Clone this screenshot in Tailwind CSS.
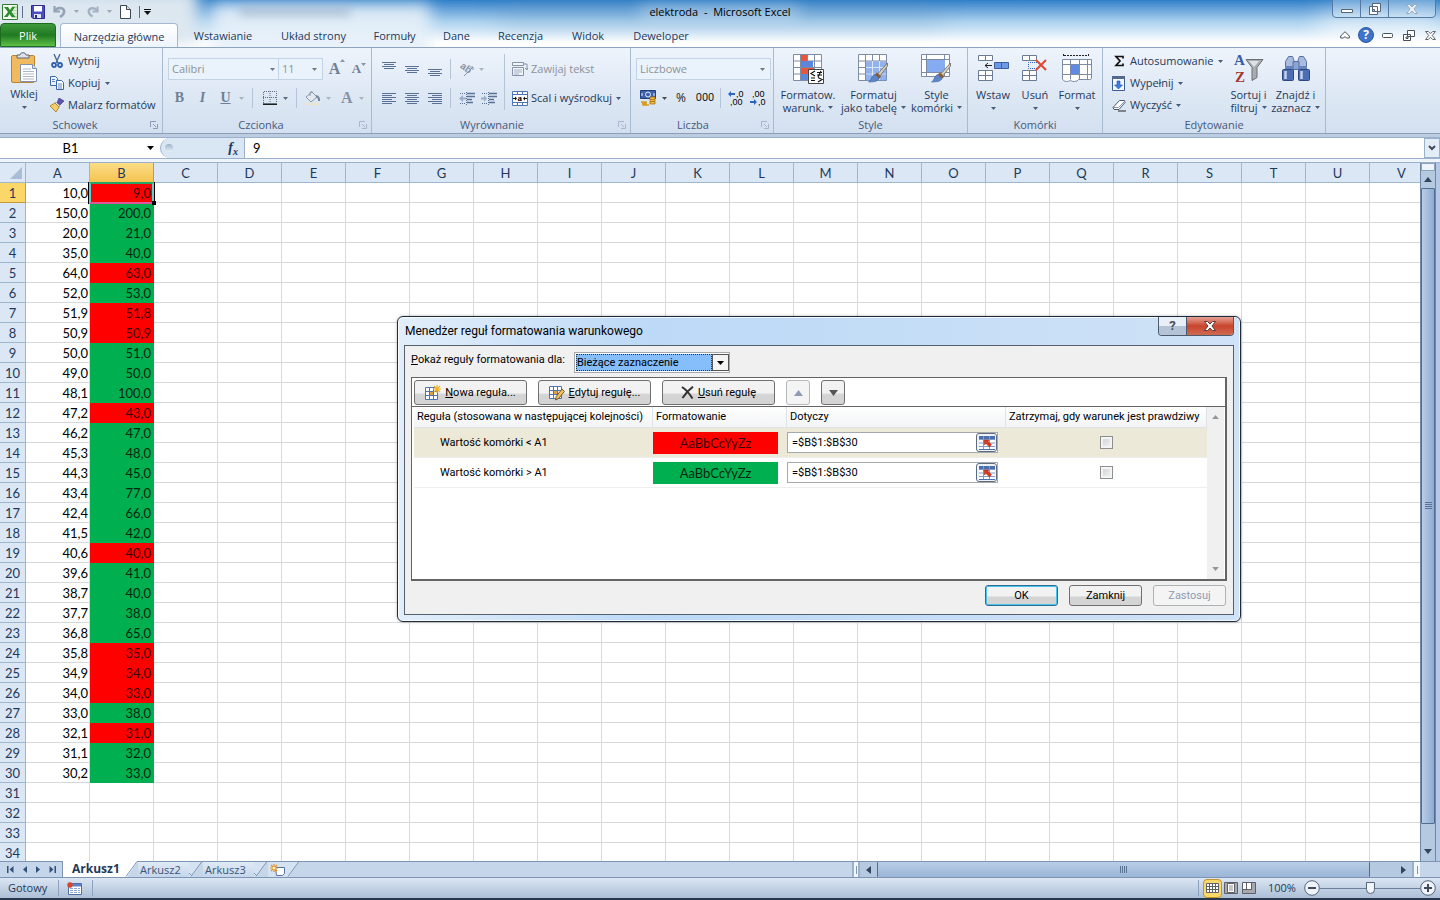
<!DOCTYPE html>
<html lang="pl">
<head>
    <meta charset="UTF-8">
    <meta name="viewport" content="width=device-width, initial-scale=1.0">
    <title>elektroda - Microsoft Excel</title>
    <script src="https://cdn.jsdelivr.net/npm/@tailwindcss/browser@4"></script>
</head>
<body class="h-screen flex flex-col overflow-hidden bg-[#bccde2] font-['Open_Sans',sans-serif] text-[11px] leading-4 text-[#1e395b]">

    <!-- Shared icons -->
    <svg class="hidden">
        <symbol id="down" viewBox="0 0 5 3"><path d="M0 0h5L2.500 3z" fill="currentColor" fill-opacity=".8"/></symbol>
        <symbol id="up" viewBox="0 0 5 3"><path d="M0 3h5L2.500 0z" fill="currentColor" fill-opacity=".8"/></symbol>
        <symbol id="launcher" viewBox="0 0 8 8"><path d="M.5 6V.5H6" fill="none" stroke="#8a9bb3"/><path d="M3 3l3 3M7.500 3v4.500H3" fill="none" stroke="#8a9bb3"/></symbol>
        <symbol id="brush" viewBox="0 0 20 20"><path d="M19 1L10 11l2 2 7-9z" fill="#d8d2c4" stroke="#6b655a" stroke-width=".8"/><path d="M9 10l4 4-2 2-4-4z" fill="#8a5a32"/><path d="M7 12l4 4c-2 3-6 3-10 3 3-1 2-6 6-7z" fill="#5d86c8" stroke="#3d62a0" stroke-width=".6"/></symbol>
        <symbol id="grid" viewBox="0 0 30 27"><path d="M.5.500h28v26H.5z" fill="#fff"/><path d="M.5.500h28v26H.5zM.5 7h28M.5 13.500h28M.5 20h28M7.500.500v26M14.500.500v26M21.500.500v26" fill="none" stroke="#7d8ba3"/></symbol>
        <symbol id="picker" viewBox="0 0 16 14"><path d="M.5.500h15v13H.5z" fill="#fff"/><path d="M0 0h16v3H0z" fill="#4a6fae"/><path d="M0 3.500h16M0 7h16M0 10.500h16M4.500 0v14M10.500 0v14" stroke="#7f9bc9" fill="none"/><path d="M0 13.500h16" stroke="#4a6fae"/><path d="M5 4h5L9 5.500l3.500 3-2 2.500L7 7.500 5.500 9z" fill="#d63a1c" stroke="#a82a14" stroke-width=".5"/></symbol>
    </svg>

    <!-- Title bar and tabs -->
    <header class="relative h-[48px] shrink-0 flex flex-col overflow-hidden bg-linear-to-b from-[#2f80c8] via-[#a9d0ee] via-45% to-white to-90% border-b border-[#8ea3bf]">
        <div class="absolute -left-4 -top-3 w-[214px] h-14 bg-[#dde7f0] blur-sm"></div>
        <div class="absolute left-[212px] top-1 w-[218px] h-14 bg-[#e6eff8]/90 blur-sm"></div>
        <div class="absolute left-[240px] top-2 w-[110px] h-2 bg-[#8da2b8]/50 blur-xs"></div>
        <div class="absolute left-[500px] top-2 w-[440px] h-3 bg-[#5c8db8]/40 blur-md"></div>
        <div class="absolute left-[640px] top-1.5 w-[160px] h-3 bg-white/40 blur-sm"></div>
        <div class="absolute right-0 top-3 w-[120px] h-10 bg-white/50 blur-md"></div>

        <div class="relative h-6 flex items-center pl-0.5">
            <svg class="w-4 h-4" viewBox="0 0 16 16"><path d="M.5.500h15v15H.5z" fill="#f4fbf1" stroke="#2f7d32"/><path d="M10 2h5v12h-5z" fill="#b9dcae"/><path d="M10 5h5M10 8h5M10 11h5" stroke="#fff"/><path d="M2 3h4l2 3 2-3h3L9.500 8l4 5h-4L7.500 10l-2 3H2l4-5z" fill="#2e8b32"/></svg>
            <span class="w-px h-3 bg-[#5f7086] ml-1"></span>
            <button aria-label="Zapisz" class="ml-2"><svg class="w-[14px] h-[14px]" viewBox="0 0 14 14"><path d="M.5.500h13v13H2L.5 12z" fill="#4b4fc0" stroke="#2b2f86"/><path d="M3 1h8v5.500H3z" fill="#fff"/><path d="M3 9h7v4H3z" fill="#dfe3f3"/><path d="M4 10h2v3H4z" fill="#2b2f86"/></svg></button>
            <button aria-label="Cofnij" class="ml-2 flex items-center gap-2 text-[#8b97a6]"><svg class="w-[13px] h-[13px]" viewBox="0 0 13 13"><path d="M1.500 1v5.500H7" fill="none" stroke="#94a3b8" stroke-width="2.200"/><path d="M2 6c2-4 8-4 9-.5.600 3-1.500 5-4 6.500" fill="none" stroke="#94a3b8" stroke-width="2.600"/></svg><svg class="w-[5px] h-[3px]"><use href="#down"/></svg></button>
            <button aria-label="Ponów" class="ml-2 flex items-center gap-2 text-[#8b97a6]"><svg class="w-[12px] h-[13px]" viewBox="0 0 13 13"><path d="M11.500 1v5.500H6" fill="none" stroke="#a5b2c4" stroke-width="2.200"/><path d="M11 6C9 2 3 2 2 5.500c-.6 3 1.500 5 4 6.500" fill="none" stroke="#a5b2c4" stroke-width="2.600"/></svg><svg class="w-[5px] h-[3px]"><use href="#down"/></svg></button>
            <button aria-label="Nowy" class="ml-2"><svg class="w-[11px] h-[14px]" viewBox="0 0 11 14"><path d="M.5.500h6l4 4v9H.5z" fill="#fff" stroke="#3b4656"/><path d="M6.500.500v4h4" fill="#d8e2ee" stroke="#3b4656"/></svg></button>
            <span class="w-px h-3 bg-[#5f7086] ml-2"></span>
            <button aria-label="Dostosuj" class="ml-1"><svg class="w-[7px] h-[6px]" viewBox="0 0 7 6"><path d="M0 0h7v1H0zM0 2h7L3.500 6z" fill="#111"/></svg></button>
        </div>
        <h1 class="absolute inset-x-0 top-1 text-center text-black whitespace-pre">elektroda  -  Microsoft Excel</h1>
        <div class="absolute right-1 -top-px flex h-[19px] border border-[#5579a2] rounded-b bg-white/25 text-white">
            <button aria-label="Minimalizuj" class="w-7 grid place-items-center border-r border-[#5579a2]"><svg class="w-3 h-5" viewBox="0 0 12 20"><path d="M.5 9.500h11v3H.5z" fill="#fff" stroke="#55657a"/></svg></button>
            <button aria-label="Przywróć" class="w-7 grid place-items-center border-r border-[#5579a2]"><svg class="w-3 h-3" viewBox="0 0 12 12"><path d="M3.500.500h8v8h-8zM.5 3.500h8v8h-8z" fill="#fff" stroke="#55657a"/><path d="M3.500 6.500h2v2h-2z" fill="#9cc" stroke="#55657a"/></svg></button>
            <button aria-label="Zamknij program" class="w-[46px] grid place-items-center"><svg class="w-3 h-[10px]" viewBox="0 0 12 10"><path d="M.5.500h3L6 3 8.500.500h3L8 5l3.500 4.500h-3L6 7 3.500 9.500h-3L4 5z" fill="#e9f0f7" stroke="#93a9c0"/></svg></button>
        </div>

        <nav class="relative flex h-6">
            <button class="w-14 h-6 pt-0.5 rounded-t-sm border border-[#1c6b1e] bg-linear-to-b from-[#3f9a3c] via-[#1f7a22] to-[#5cbf45] text-white">Plik</button>
            <a href="#" class="ml-1 w-[118px] h-6 pt-0.5 grid place-items-center rounded-t border border-b-0 border-[#a6b8d0] bg-linear-to-b from-white to-[#eef4fc]">Narzędzia główne</a>
            <a href="#" class="w-[90px] pt-0.5 grid place-items-center">Wstawianie</a>
            <a href="#" class="w-[91px] pt-0.5 grid place-items-center">Układ strony</a>
            <a href="#" class="w-[71px] pt-0.5 grid place-items-center">Formuły</a>
            <a href="#" class="w-[53px] pt-0.5 grid place-items-center">Dane</a>
            <a href="#" class="w-[75px] pt-0.5 grid place-items-center">Recenzja</a>
            <a href="#" class="w-[60px] pt-0.5 grid place-items-center">Widok</a>
            <a href="#" class="w-[86px] pt-0.5 grid place-items-center">Deweloper</a>
            <div class="ml-auto mr-1 flex items-center gap-2">
                <button aria-label="Zwiń wstążkę"><svg class="w-[10px] h-[8px]" viewBox="0 0 10 8"><path d="M5 .7L9.300 5v2H6.500L5 5.500 3.500 7H.7V5z" fill="#fff" stroke="#4a5058"/></svg></button>
                <button aria-label="Pomoc" class="w-4 h-4 rounded-full bg-[#3d73c8] border border-[#2a57a0] text-white font-bold text-xs leading-[14px]">?</button>
                <button aria-label="Minimalizuj skoroszyt"><svg class="w-[11px] h-[5px]" viewBox="0 0 11 5"><rect x=".5" y=".5" width="10" height="4" rx="1" fill="#fff" stroke="#4a5058"/></svg></button>
                <button aria-label="Przywróć skoroszyt" class="ml-0.5"><svg class="w-3 h-[11px]" viewBox="0 0 12 11"><path d="M4.500.500h7v6h-7zM.5 4.500h7v6h-7z" fill="#fff" stroke="#4a5058"/><path d="M3 7h2v1.500H3z" fill="none" stroke="#4a5058"/></svg></button>
                <button aria-label="Zamknij skoroszyt" class="ml-0.5"><svg class="w-[11px] h-[9px]" viewBox="0 0 12 10"><path d="M.5.500h3L6 3 8.500.500h3L8 5l3.500 4.500h-3L6 7 3.500 9.500h-3L4 5z" fill="#fff" stroke="#4a5058"/></svg></button>
            </div>
        </nav>
    </header>

    <!-- Ribbon -->
    <div class="flex shrink-0 h-[86px] bg-linear-to-b from-[#eef4fc] via-[#dfe9f5] to-[#d3e0f0] border-b border-[#8b9fba]">
        <section class="w-[163px] shrink-0 flex flex-col border-r border-[#a9bbd2]">
            <div class="h-[69px] flex">
                <button class="w-12 flex flex-col items-center pt-1">
                    <svg class="w-8 h-8" viewBox="0 0 32 32"><rect x="3.500" y="3.500" width="23" height="27" rx="1.500" fill="#efbb5e" stroke="#b98532"/><path d="M9 6V3h3c0-3 6-3 6 0h3v3z" fill="#dfe3e8" stroke="#5d6672"/><path d="M12.500 12.500h12l4 4v13h-16z" fill="#fff" stroke="#7f92ad"/><path d="M24.500 12.500v4h4" fill="#d5e0ee" stroke="#7f92ad"/><path d="M15 17h8M15 19.500h11M15 22h11M15 24.500h11M15 27h11" stroke="#a9b7cb"/></svg>
                    <span class="leading-4 mt-0.5">Wklej</span>
                    <svg class="w-[5px] h-[3px] mt-1"><use href="#down"/></svg>
                </button>
                <div class="flex flex-col pt-0.5 pl-0.5">
                    <button class="h-[22px] flex items-center gap-1"><svg class="w-[14px] h-[14px]" viewBox="0 0 14 14"><path d="M4 0l4 9M10 0L6 9" stroke="#4c6a94" stroke-width="1.400"/><circle cx="4" cy="11" r="2" fill="none" stroke="#2f5fb0" stroke-width="1.800"/><circle cx="10" cy="11" r="2" fill="none" stroke="#2f5fb0" stroke-width="1.800"/></svg>Wytnij</button>
                    <button class="h-[22px] flex items-center gap-1"><svg class="w-[14px] h-[14px]" viewBox="0 0 14 14"><path d="M.5.500h5l2 2v7h-7z" fill="#e9f1fb" stroke="#3c66a8"/><path d="M6.500 4.500h5l2 2v7h-7z" fill="#fff" stroke="#3c66a8"/><path d="M2 3.500h3M2 5.500h3M8 8h4M8 10h4M8 12h4" stroke="#5c86c4"/></svg>Kopiuj<svg class="w-[5px] h-[3px] ml-px"><use href="#down"/></svg></button>
                    <button class="h-[22px] flex items-center gap-1 whitespace-nowrap"><svg class="w-[14px] h-[14px]" viewBox="0 0 14 14"><path d="M9 0l5 3-4 4-3-2z" fill="#5b55b0" stroke="#39347e" stroke-width=".6"/><path d="M6 4l4 4-1 1-4-4z" fill="#e8e8ee" stroke="#77747e" stroke-width=".5"/><path d="M5 5l4 4-3 5L0 8z" fill="#f3cf6b" stroke="#a8761f" stroke-width=".8"/></svg>Malarz formatów</button>
                </div>
            </div>
            <div class="flex items-center h-4 pr-1"><span class="flex-1 text-center text-[#48597a]">Schowek</span><svg class="w-2 h-2"><use href="#launcher"/></svg></div>
        </section>

        <section class="w-[209px] shrink-0 flex flex-col border-r border-[#a9bbd2]">
            <div class="h-[69px] flex flex-col pt-2.5 gap-[7px] pl-[5px]">
                <div class="flex items-center h-[22px]">
                    <div class="relative w-[111px] h-[22px]"><select aria-label="Czcionka" class="appearance-none w-full h-full pl-[3px] border border-[#c3d3e6] bg-[#eaf2fb] text-[#8d9299] outline-none"><option>Calibri</option></select><svg class="absolute right-1 top-2.5 w-[5px] h-[3px] text-[#4d5a6c]"><use href="#down"/></svg></div>
                    <div class="relative w-11 h-[22px]"><select aria-label="Rozmiar czcionki" class="appearance-none w-full h-full pl-[3px] border border-l-0 border-[#c3d3e6] bg-[#eaf2fb] text-[#8d9299] outline-none"><option>11</option></select><svg class="absolute right-1.5 top-2.5 w-[5px] h-[3px] text-[#4d5a6c]"><use href="#down"/></svg></div>
                    <button aria-label="Zwiększ czcionkę" class="ml-[3px] w-[22px] flex justify-center font-['Liberation_Serif',serif] font-bold text-base text-[#6f7f97]">A<svg class="w-[5px] h-[3px] mt-0.5"><use href="#up"/></svg></button>
                    <button aria-label="Zmniejsz czcionkę" class="w-[22px] flex justify-center font-['Liberation_Serif',serif] font-bold text-[13px] text-[#6f7f97]">A<svg class="w-[5px] h-[3px] mt-0.5"><use href="#down"/></svg></button>
                </div>
                <div class="flex items-center h-[22px] text-[#6f7f97]">
                    <button class="w-[23px] font-['Liberation_Serif',serif] font-bold text-sm">B</button>
                    <button class="w-[23px] font-['Liberation_Serif',serif] italic font-bold text-sm">I</button>
                    <button class="w-[23px] font-['Liberation_Serif',serif] font-bold text-sm underline">U</button>
                    <svg class="w-[5px] h-[3px] ml-0.5 text-[#9aa6b8]"><use href="#down"/></svg>
                    <span class="w-px h-5 bg-[#b4c3d7] ml-2 mr-1"></span>
                    <button aria-label="Obramowanie" class="flex items-center gap-1.5 pl-1.5"><svg class="w-[14px] h-[14px]" viewBox="0 0 14 14"><path d="M.5 12V.500h13V12M7 0v12M0 6.500h14" fill="none" stroke="#5f6f87" stroke-dasharray="1 1"/><path d="M0 13.200h14" stroke="#111" stroke-width="1.500"/></svg><svg class="w-[5px] h-[3px] text-[#3c4a5f]"><use href="#down"/></svg></button>
                    <span class="w-px h-5 bg-[#b4c3d7] ml-2 mr-1"></span>
                    <button aria-label="Kolor wypełnienia" class="flex items-center gap-1.5 pl-1"><svg class="w-[15px] h-[14px]" viewBox="0 0 15 14"><path d="M1 6l6-5 5 5-6 5z" fill="#e4e9f0" stroke="#8a97aa"/><path d="M5 5V1.500q1.500-2 3 0" fill="none" stroke="#8a97aa"/><path d="M11 5q3.500 1 3 5" stroke="#7587a2" stroke-width="2" fill="none"/><path d="M0 13h14" stroke="#efe5cf" stroke-width="2"/></svg><svg class="w-[5px] h-[3px] text-[#9aa6b8]"><use href="#down"/></svg></button>
                    <button aria-label="Kolor czcionki" class="ml-2.5 flex items-center gap-1.5 font-['Liberation_Serif',serif] font-bold text-base text-[#8592a7]">A<svg class="w-[5px] h-[3px] text-[#9aa6b8]"><use href="#down"/></svg></button>
                </div>
            </div>
            <div class="flex items-center h-4 pr-1"><span class="flex-1 text-center text-[#48597a]">Czcionka</span><svg class="w-2 h-2 opacity-60"><use href="#launcher"/></svg></div>
        </section>

        <section class="w-[259px] shrink-0 flex flex-col border-r border-[#a9bbd2]">
            <div class="h-[69px] flex pt-1.5">
                <div class="flex flex-col gap-[7px] pt-1 pl-[5px] w-[132px] text-[#5a7196]">
                    <div class="flex items-center h-[22px]">
                        <button aria-label="Do góry" class="w-[23px] grid place-items-center"><svg class="w-[14px] h-[14px]" viewBox="0 0 14 14"><path d="M0 .5h14M2 2.500h10M0 4.500h14M2 6.500h10" stroke="currentColor"/></svg></button>
                        <button aria-label="Do środka" class="w-[23px] grid place-items-center"><svg class="w-[14px] h-[14px]" viewBox="0 0 14 14"><path d="M0 4.500h14M2 6.500h10M0 8.500h14M2 10.500h10" stroke="currentColor"/></svg></button>
                        <button aria-label="Do dołu" class="w-[23px] grid place-items-center"><svg class="w-[14px] h-[14px]" viewBox="0 0 14 14"><path d="M0 7.500h14M2 9.500h10M0 11.500h14M2 13.500h10" stroke="currentColor"/></svg></button>
                        <span class="w-px h-5 bg-[#b4c3d7] ml-1 mr-2"></span>
                        <button aria-label="Orientacja" class="flex items-center gap-1"><svg class="w-4 h-4 overflow-visible" viewBox="0 0 16 16"><text x="0" y="8" transform="rotate(35 3 8)" font-size="10" font-weight="bold" fill="#8592a7" font-family="Liberation Sans">ab</text><path d="M5 15L14 6M11 6h3v3" fill="none" stroke="#8592a7"/></svg><svg class="w-[5px] h-[3px] text-[#9aa6b8]"><use href="#down"/></svg></button>
                    </div>
                    <div class="flex items-center h-[22px]">
                        <button aria-label="Do lewej" class="w-[23px] grid place-items-center"><svg class="w-[14px] h-[11px]" viewBox="0 0 14 11"><path d="M0 .5h14M0 2.500h10M0 4.500h14M0 6.500h10M0 8.500h14M0 10.500h10" stroke="currentColor"/></svg></button>
                        <button aria-label="Wyśrodkuj" class="w-[23px] grid place-items-center"><svg class="w-[14px] h-[11px]" viewBox="0 0 14 11"><path d="M0 .5h14M2 2.500h10M0 4.500h14M2 6.500h10M0 8.500h14M2 10.500h10" stroke="currentColor"/></svg></button>
                        <button aria-label="Do prawej" class="w-[23px] grid place-items-center"><svg class="w-[14px] h-[11px]" viewBox="0 0 14 11"><path d="M0 .5h14M4 2.500h10M0 4.500h14M4 6.500h10M0 8.500h14M4 10.500h10" stroke="currentColor"/></svg></button>
                        <span class="w-px h-5 bg-[#b4c3d7] ml-1 mr-2"></span>
                        <button aria-label="Zmniejsz wcięcie"><svg class="w-4 h-[13px]" viewBox="0 0 16 13"><path d="M1 1.500h5M1 11.500h5M7.500 0v13" stroke="#5a7196" stroke-dasharray="1 1"/><path d="M8 1.500h8M8 4.500h8M8 7.500h5M8 10.500h6" stroke="#5a7196" stroke-width="1.500"/><path d="M0 6.500L4 3v2.500h3v2H4V10z" fill="#9bacc6"/></svg></button>
                        <button aria-label="Zwiększ wcięcie" class="ml-1.5"><svg class="w-4 h-[13px]" viewBox="0 0 16 13"><path d="M1 1.500h5M1 11.500h5M7.500 0v13" stroke="#5a7196" stroke-dasharray="1 1"/><path d="M8 1.500h8M8 4.500h8M8 7.500h5M8 10.500h6" stroke="#5a7196" stroke-width="1.500"/><path d="M6 6.500L3 3v2.500H0v2h3V10z" fill="#9bacc6"/></svg></button>
                    </div>
                </div>
                <span class="w-px h-[56px] bg-[#b4c3d7]"></span>
                <div class="flex flex-col gap-[7px] pt-1 pl-[7px]">
                    <button class="h-[22px] flex items-center gap-[3px] text-[#8d9299] whitespace-nowrap"><svg class="w-4 h-4" viewBox="0 0 16 16"><path d="M.5 1.500h11v3H.5zM.5 6.500h11v8H.5z" fill="#f2f5f9" stroke="#8592a7"/><path d="M2 9h8M2 11h8M2 13h5" stroke="#a3afc0"/><path d="M12 3h3v5M13 7l2 2 1-2" fill="none" stroke="#8592a7"/></svg>Zawijaj tekst</button>
                    <button class="h-[22px] flex items-center gap-[3px] whitespace-nowrap"><svg class="w-4 h-[15px]" viewBox="0 0 16 15"><path d="M.5.500h15v14H.5z" fill="#fff" stroke="#4c74b4"/><path d="M0 3.500h16M0 11.500h16M5.500 0v3M10.500 0v3M5.500 12v3M10.500 12v3" stroke="#4c74b4"/><path d="M1 7.500h3M12 7.500h3" stroke="#111"/><path d="M3 5.500L5 7.500 3 9.500zM13 5.500L11 7.500l2 2z" fill="#111"/><text x="5.500" y="10" font-size="9" font-weight="bold" font-family="Liberation Serif">a</text></svg>Scal i wyśrodkuj<svg class="w-[5px] h-[3px] ml-px"><use href="#down"/></svg></button>
                </div>
            </div>
            <div class="flex items-center h-4 pr-1"><span class="flex-1 text-center pr-1.5 text-[#48597a]">Wyrównanie</span><svg class="w-2 h-2 opacity-60"><use href="#launcher"/></svg></div>
        </section>

        <section class="w-[143px] shrink-0 flex flex-col border-r border-[#a9bbd2]">
            <div class="h-[69px] flex flex-col pt-2.5 gap-[7px] pl-[5px]">
                <div class="relative w-[135px] h-[22px]"><select aria-label="Format liczb" class="appearance-none w-full h-full pl-[3px] border border-[#c3d3e6] bg-[#eaf2fb] text-[#8d9299] outline-none"><option>Liczbowe</option></select><svg class="absolute right-1.5 top-2.5 w-[5px] h-[3px] text-[#4d5a6c]"><use href="#down"/></svg></div>
                <div class="flex items-center h-[22px] pl-1 text-[#222]">
                    <button aria-label="Format księgowy" class="flex items-center gap-1.5"><svg class="w-4 h-4" viewBox="0 0 16 16"><path d="M.5.500h15v8H.5z" fill="#3f62ad" stroke="#223e7c"/><circle cx="8" cy="4.500" r="2.500" fill="none" stroke="#e8eefc"/><path d="M2 3v3M14 3v3" stroke="#e8eefc"/><path d="M10 7h5v7h-5z" fill="#f0b93c" stroke="#9a6a10" stroke-width=".7"/><path d="M10 9.500h5M10 11.500h5" stroke="#9a6a10" stroke-width=".7"/><path d="M1 12h5v1.500H3V15h6" fill="none" stroke="#d79b22" stroke-width="1.700"/></svg><svg class="w-[5px] h-[3px]"><use href="#down"/></svg></button>
                    <button class="w-6 ml-0.5 text-xs">%</button>
                    <button class="w-6 font-['Roboto',sans-serif]">000</button>
                    <span class="w-px h-5 bg-[#b4c3d7] mx-[3px]"></span>
                    <button aria-label="Zwiększ dziesiętne" class="ml-1"><svg class="w-4 h-4 overflow-visible" viewBox="0 0 16 16"><path d="M0 4l3-3v2h4v2H3v2z" fill="#2f63c4"/><text x="8" y="7" font-size="9" font-family="Liberation Sans">,0</text><text x="2" y="15" font-size="9" font-family="Liberation Sans">,00</text></svg></button>
                    <button aria-label="Zmniejsz dziesiętne" class="ml-1.5"><svg class="w-4 h-4 overflow-visible" viewBox="0 0 16 16"><text x="2" y="7" font-size="9" font-family="Liberation Sans">,00</text><path d="M7 12l-3-3v2H0v2h4v2z" fill="#2f63c4"/><text x="8" y="15" font-size="9" font-family="Liberation Sans">,0</text></svg></button>
                </div>
            </div>
            <div class="flex items-center h-4 pr-1"><span class="flex-1 text-center pr-1.5 text-[#48597a]">Liczba</span><svg class="w-2 h-2 opacity-60"><use href="#launcher"/></svg></div>
        </section>

        <section class="w-[194px] shrink-0 flex flex-col border-r border-[#a9bbd2]">
            <div class="h-[69px] flex pl-0.5">
                <button class="w-16 flex flex-col items-center pt-1.5 leading-[13px]">
                    <svg class="w-[31px] h-[30px]" viewBox="0 0 31 30"><use href="#grid" width="30" height="27"/><path d="M8 1h6v6H8zM8 14h13v6H8z" fill="#e8553c"/><path d="M8 7h12v6H8zM8 20h6v6H8z" fill="#5c86dc"/><path d="M15.500 15.500h15v14h-15z" fill="#fff" stroke="#444"/><path d="M22 17l-4 2.500 4 2.500M18 24h4M24 18.500h5M24 21h5M28 17l-3 6M18 26.500h4M25 23.500l4 2-4 2.500" fill="none" stroke="#111" stroke-width="1.200"/></svg>
                    <span class="mt-1">Formatow.</span><span class="flex items-center gap-1">warunk. <svg class="w-[5px] h-[3px]"><use href="#down"/></svg></span>
                </button>
                <button class="w-[67px] flex flex-col items-center pt-1.5 leading-[13px] whitespace-nowrap">
                    <svg class="w-[31px] h-[30px]" viewBox="0 0 31 30"><use href="#grid" width="30" height="27"/><path d="M8 7.500h20.500v19H8z" fill="#6e98e8" opacity=".75"/><path d="M8 13.500h20M8 20h20M14.500 7v19M21.500 7v19" stroke="#dbe6fa"/><use href="#brush" x="9" y="8" width="22" height="21"/></svg>
                    <span class="mt-1">Formatuj</span><span class="flex items-center gap-1">jako tabelę<svg class="w-[5px] h-[3px]"><use href="#down"/></svg></span>
                </button>
                <button class="w-[59px] flex flex-col items-center pt-1.5 leading-[13px] whitespace-nowrap">
                    <svg class="w-[31px] h-[30px]" viewBox="0 0 31 30"><path d="M.5.500h28v22H.5z" fill="#fff" stroke="#7d8ba3"/><path d="M.5 5.500h28M.5 18.500h28M5.500.500v22M23.500.500v22" stroke="#7d8ba3"/><path d="M6 6h18v12H6z" fill="#86abf0"/><use href="#brush" x="9" y="8" width="22" height="21"/></svg>
                    <span class="mt-1">Style</span><span class="flex items-center gap-1">komórki<svg class="w-[5px] h-[3px]"><use href="#down"/></svg></span>
                </button>
            </div>
            <div class="h-4 text-center text-[#48597a]">Style</div>
        </section>

        <section class="w-[135px] shrink-0 flex flex-col border-r border-[#a9bbd2]">
            <div class="h-[69px] flex pl-1">
                <button class="w-[42px] flex flex-col items-center pt-1.5">
                    <svg class="w-[31px] h-[28px]" viewBox="0 0 31 28"><path d="M.5 1.500h14v5H.5zM7.500 1.500v5M.5 16.500h14v10H.5zM.5 21.500h14M7.500 16.500v10" fill="#fff" stroke="#6b7b94"/><path d="M16.500 8.500h14v6h-14z" fill="#6e98e8" stroke="#3d5f9e"/><path d="M23.500 8.500v6" stroke="#3d5f9e"/><path d="M7 11.500h7M10 9l-3 2.500 3 2.500" fill="none" stroke="#222"/></svg>
                    <span class="mt-[5px]">Wstaw</span><svg class="w-[5px] h-[3px] mt-1"><use href="#down"/></svg>
                </button>
                <button class="w-[42px] flex flex-col items-center pt-1.5">
                    <svg class="w-[26px] h-[28px]" viewBox="0 0 26 28"><path d="M.5 1.500h14v5H.5zM7.500 1.500v5M.5 16.500h14v10H.5zM.5 21.500h14M7.500 16.500v10" fill="#fff" stroke="#6b7b94"/><path d="M15 8.500H6.500v6H15" fill="none" stroke="#2f63c4" stroke-dasharray="1 1"/><path d="M14 6l10 10M24 6L14 16" stroke="#e2472f" stroke-width="2"/></svg>
                    <span class="mt-[5px]">Usuń</span><svg class="w-[5px] h-[3px] mt-1"><use href="#down"/></svg>
                </button>
                <button class="w-[42px] flex flex-col items-center pt-1.5">
                    <svg class="w-[31px] h-[28px]" viewBox="0 0 31 28"><path d="M1.500 0v3M26.500 0v3M2 1.500h25" stroke="#222" stroke-dasharray="2 1"/><path d="M.5 5.500h29v19q0 1-2 1h-11q-1 2-4 2t-4-1q-2 1-4 1t-4-2z" fill="#fff" stroke="#7d8ba3"/><path d="M.5 10.500h29M.5 20.500h29M8.500 5.500v20M17.500 5.500v20M25.500 5.500v20" stroke="#7d8ba3"/><path d="M9 11h8v9H9z" fill="#5f8be4"/></svg>
                    <span class="mt-[5px]">Format</span><svg class="w-[5px] h-[3px] mt-1"><use href="#down"/></svg>
                </button>
            </div>
            <div class="h-4 text-center text-[#48597a]">Komórki</div>
        </section>

        <section class="w-[223px] shrink-0 flex flex-col border-r border-[#a9bbd2]">
            <div class="h-[69px] flex pl-[9px]">
                <div class="w-[113px] flex flex-col pt-0.5">
                    <button class="h-[22px] flex items-center gap-1 whitespace-nowrap"><svg class="w-[14px] h-[12px]" viewBox="0 0 14 12"><path d="M11 3.500V1.500H4l4 4.500-4 4.500h7V8.500" fill="none" stroke="#111" stroke-width="1.700"/></svg>Autosumowanie<svg class="w-[5px] h-[3px] ml-px"><use href="#down"/></svg></button>
                    <button class="h-[22px] flex items-center gap-1"><svg class="w-[14px] h-[15px]" viewBox="0 0 14 15"><path d="M.5.500h12v14H.5z" fill="#f4f8fd" stroke="#3c5e98"/><path d="M0 0h13v3H0z" fill="#54698e"/><path d="M5 5h3v4h2.500l-4 4-4-4H5z" fill="#3f7be0" stroke="#1f4fa8" stroke-width=".6"/></svg>Wypełnij<svg class="w-[5px] h-[3px]"><use href="#down"/></svg></button>
                    <button class="h-[22px] flex items-center gap-1"><svg class="w-[14px] h-[13px]" viewBox="0 0 14 13"><path d="M1 8.500L7.500 1.500h5l.5 2-6 7H2z" fill="#fff" stroke="#4c5a70"/><path d="M1 8.500h5.500L13 2" fill="none" stroke="#8795aa"/><path d="M6 12h8" stroke="#222"/></svg>Wyczyść<svg class="w-[5px] h-[3px]"><use href="#down"/></svg></button>
                </div>
                <button class="w-[47px] flex flex-col items-center pt-1.5 leading-[13px] whitespace-nowrap">
                    <svg class="w-[30px] h-[30px] overflow-visible" viewBox="0 0 30 30"><path d="M12 5.500h17l-6 8v10l-5 3v-13z" fill="#a8acb0" stroke="#6c7075"/><path d="M15 7h10l-5 6z" fill="#dfe2e4"/><text x="0" y="11" font-size="15" font-weight="bold" fill="#3a5aa8" font-family="Liberation Serif">A</text><text x="1" y="28" font-size="15" font-weight="bold" fill="#a8322c" font-family="Liberation Serif">Z</text></svg>
                    <span class="mt-1">Sortuj i</span><span class="flex items-center gap-1">filtruj<svg class="w-[5px] h-[3px]"><use href="#down"/></svg></span>
                </button>
                <button class="w-[47px] flex flex-col items-center pt-1.5 leading-[13px] whitespace-nowrap">
                    <svg class="w-[30px] h-[30px]" viewBox="0 0 30 30"><path d="M7.500 2.500h4l1.500 4v6H4.500v-5zM18.500 2.500h4l3 5v5H17v-6z" fill="#a9bce0" stroke="#5670a6"/><path d="M12 7.500h6v8h-6z" fill="#8ba4d4" stroke="#5670a6"/><path d="M4 12h8v3H4zM18 12h8v3h-8z" fill="#6482bd"/><rect x="1.500" y="15.500" width="11" height="11" rx="1" fill="#4d6eb2" stroke="#2d4782"/><rect x="17.500" y="15.500" width="11" height="11" rx="1" fill="#4d6eb2" stroke="#2d4782"/><path d="M4.500 17v8M20.500 17v8" stroke="#c3d2f0" stroke-width="2.500"/></svg>
                    <span class="mt-1">Znajdź i</span><span class="flex items-center gap-1">zaznacz<svg class="w-[5px] h-[3px]"><use href="#down"/></svg></span>
                </button>
            </div>
            <div class="h-4 text-center text-[#48597a]">Edytowanie</div>
        </section>
    </div>

    <!-- Formula bar -->
    <div class="mt-[3px] shrink-0 flex h-[22px] border-y border-[#9bb0ca] bg-white font-['Lato',sans-serif] text-[13px] text-black">
        <input aria-label="Pole nazwy" value="B1" class="w-[141px] text-center outline-none">
        <button aria-label="Lista nazw" class="w-[19px] grid place-items-center"><svg class="w-[7px] h-1" viewBox="0 0 7 4"><path d="M0 0h7L3.500 4z"/></svg></button>
        <div class="w-[85px] flex items-center justify-between pl-1 pr-1 rounded-l-full bg-[#d9e6f4] border-l border-r border-[#9bb0ca]">
            <span class="w-2 h-2 rounded-full bg-linear-to-b from-[#9fb2cb] to-[#e8f0fa]"></span>
            <button aria-label="Wstaw funkcję" class="font-['Liberation_Serif',serif] italic font-bold text-sm text-[#1e395b] pr-0.5">f<sub class="text-[10px]">x</sub></button>
        </div>
        <input aria-label="Formuła" value="9" class="flex-1 pl-2 outline-none">
        <button aria-label="Rozwiń pasek" class="w-4 grid place-items-center border border-[#9bb0ca] bg-[#e3edf8]"><svg class="w-2 h-[6px]" viewBox="0 0 8 6"><path d="M1 1l3 3 3-3" fill="none" stroke="#3f4a5a" stroke-width="2"/></svg></button>
    </div>
    <div class="h-[3px] shrink-0 bg-[#eef4fb]"></div>

    <!-- Sheet -->
    <div class="flex-1 min-h-0 flex border-t border-[#9bb0ca]">
        <div class="relative flex-1 min-w-0 overflow-hidden bg-white">
            <table class="table-fixed w-[1434px] border-separate border-spacing-0 font-['Lato',sans-serif] text-[13px] leading-[17px] text-black">
                <thead><tr id="columns"></tr></thead>
                <tbody id="rows"></tbody>
            </table>
            <!-- Active cell frame -->
            <div class="absolute left-[88px] top-[19px] w-[67px] h-[22px] border-x border-black">
                <div class="h-full border-2 border-t-[#27a567] border-x-[#5bd0cf] border-b-[#e0559b]"></div>
            </div>
            <div class="absolute left-[152px] top-[38px] w-1 h-1 bg-black"></div>
        </div>
        <div class="w-[15px] shrink-0 flex flex-col items-center border-l border-[#6f88a8] bg-[#b5c9e1] text-[#33445e]">
            <div class="w-full h-2 border border-[#8ba1bd] bg-[#eef4fb]"></div>
            <button aria-label="W górę" class="h-[17px] grid place-items-center"><svg class="w-2 h-[5px]" viewBox="0 0 8 5"><path d="M0 5h8L4 0z" fill="currentColor"/></svg></button>
            <div class="w-full flex-1 grid place-items-center border border-[#4f6d92] rounded-[1px] bg-linear-to-r from-[#b9cde6] to-[#8eabcf]"><svg class="w-[7px] h-2" viewBox="0 0 7 8"><path d="M0 .5h7M0 2.500h7M0 4.500h7M0 6.500h7" stroke="#5a7394"/></svg></div>
            <button aria-label="W dół" class="h-[37px] pt-[18px] grid place-items-center"><svg class="w-2 h-[5px]" viewBox="0 0 8 5"><path d="M0 0h8L4 5z" fill="currentColor"/></svg></button>
        </div>
        <div class="w-[5px] shrink-0 border-l border-[#6f88a8] bg-[#b5c9e6]"></div>
    </div>

    <!-- Sheet tabs -->
    <div class="h-[17px] shrink-0 flex items-stretch border-y border-[#7d95b3] bg-[#c5d6eb] text-[#3b5475]">
        <div class="w-[62px] flex items-center justify-around px-0.5 text-[#33507a]">
            <button aria-label="Pierwszy"><svg class="w-[7px] h-[7px]" viewBox="0 0 7 7"><path d="M0 0h1.500v7H0zM6.500 0v7L2.500 3.500z" fill="currentColor"/></svg></button>
            <button aria-label="Poprzedni"><svg class="w-1 h-[7px]" viewBox="0 0 4 7"><path d="M4 0v7L0 3.500z" fill="currentColor"/></svg></button>
            <button aria-label="Następny"><svg class="w-1 h-[7px]" viewBox="0 0 4 7"><path d="M0 0v7l4-3.500z" fill="currentColor"/></svg></button>
            <button aria-label="Ostatni"><svg class="w-[7px] h-[7px]" viewBox="0 0 7 7"><path d="M5.500 0H7v7H5.500zM.5 0v7l4-3.500z" fill="currentColor"/></svg></button>
        </div>
        <a href="#" class="w-[62px] -mt-px pl-[9px] border-l border-[#7d95b3] bg-white font-bold text-xs leading-4 text-[#1e395b] whitespace-nowrap">Arkusz1</a>
        <svg class="w-[14px] h-4 -mt-px" viewBox="0 0 14 16"><path d="M0 0h14L3 16H0z" fill="#fff"/><path d="M14 .5h-1L2 15.500" fill="none" stroke="#7d95b3"/></svg>
        <a href="#" class="w-[51px] pl-0.5 leading-[15px] bg-linear-to-b from-[#e0eaf6] to-[#c5d6eb]">Arkusz2</a>
        <svg class="w-[14px] h-4 -mt-px" viewBox="0 0 14 16"><path d="M0 0h14L3 16H0z" fill="#d5e2f2"/><path d="M13 .5L2 15.500M0 12l3 3M0 .5h14" fill="none" stroke="#7d95b3"/></svg>
        <a href="#" class="w-[51px] pl-0.5 leading-[15px] bg-linear-to-b from-[#e0eaf6] to-[#c5d6eb]">Arkusz3</a>
        <svg class="w-[14px] h-4 -mt-px" viewBox="0 0 14 16"><path d="M0 0h14L3 16H0z" fill="#d5e2f2"/><path d="M13 .5L2 15.500M0 12l3 3M0 .5h14" fill="none" stroke="#7d95b3"/></svg>
        <button aria-label="Wstaw arkusz" class="w-[18px] grid place-items-center bg-[#d5e2f2]"><svg class="w-[15px] h-3" viewBox="0 0 15 12"><path d="M5.500 3.500h9v6l-2 2h-6z" fill="#fff" stroke="#5670a0"/><path d="M4 0v8M0 4h8M1 1l6 6M7 1L1 7" stroke="#e0912a" stroke-width="1.200"/><circle cx="4" cy="4" r="1.500" fill="#fff3b0"/></svg></button>
        <svg class="w-[14px] h-4 -mt-px" viewBox="0 0 14 16"><path d="M0 0h14L3 16H0z" fill="#d5e2f2"/><path d="M13 .5L2 15.500M0 .5h14" fill="none" stroke="#7d95b3"/></svg>
        <div class="ml-auto w-[588px] flex items-stretch bg-[#b5c9e1]">
            <div class="w-2 grid place-items-center bg-[#f2f7fc] border-x-2 border-[#9db0c9]"><span class="w-px h-2 bg-[#8095b0]"></span></div>
            <button aria-label="W lewo" class="w-[17px] grid place-items-center"><svg class="w-[5px] h-2" viewBox="0 0 5 8"><path d="M5 0v8L0 4z" fill="#33445e"/></svg></button>
            <div class="flex-1 grid place-items-center border border-y-0 border-[#4f6d92] rounded-[1px] bg-linear-to-b from-[#b9cde6] to-[#9cb6d8]"><svg class="w-2 h-[7px]" viewBox="0 0 8 7"><path d="M.5 0v7M2.500 0v7M4.500 0v7M6.500 0v7" stroke="#5a7394"/></svg></div>
            <button aria-label="W prawo" class="w-[42px] pl-6 grid place-items-center"><svg class="w-[5px] h-2" viewBox="0 0 5 8"><path d="M0 0v8l5-4z" fill="#33445e"/></svg></button>
            <div class="w-2 grid place-items-center bg-[#f2f7fc] border-l-2 border-[#9db0c9]"><span class="w-px h-2 bg-[#8095b0]"></span></div>
            <div class="w-5 bg-[#c5d6eb]"></div>
        </div>
    </div>

    <!-- Status bar -->
    <footer class="h-[22px] shrink-0 flex items-center pl-2 pr-1 bg-linear-to-b from-[#dbe6f3] to-[#acbfd6] border-b-2 border-[#26364c]">
        <span class="w-[50px]">Gotowy</span>
        <span class="w-px h-4 bg-[#8da2bd]"></span>
        <button aria-label="Nagraj makro" class="ml-2"><svg class="w-[15px] h-[13px]" viewBox="0 0 15 13"><path d="M1.500 1.500h13v11h-13z" fill="#fff" stroke="#5270a4"/><path d="M2 2h12v2.500H2z" fill="#5b83c8"/><path d="M3 6.500h10M3 8.500h10M3 10.500h10" stroke="#8fa6cc" stroke-dasharray="3 1"/><circle cx="3" cy="3" r="2.700" fill="#d4452c"/></svg></button>
        <span class="w-px h-4 bg-[#8da2bd] ml-2.5"></span>
        <div class="ml-auto flex items-center">
            <span class="w-px h-4 bg-[#8da2bd] mr-1"></span>
            <button aria-label="Normalny" class="w-[19px] h-[19px] grid place-items-center rounded-sm border border-[#c29530] bg-[#fbd968]"><svg class="w-[13px] h-[10px]" viewBox="0 0 13 10"><path d="M.5.500h12v9H.5zM.5 3.500h12M.5 6.500h12M3.500.500v9M6.500.500v9M9.500.500v9" fill="#fff" stroke="#5f6066"/></svg></button>
            <button aria-label="Układ strony" class="ml-0.5"><svg class="w-[14px] h-3" viewBox="0 0 14 12"><path d="M.5.500h13v11H.5z" fill="#a6aab0" stroke="#5f6066"/><path d="M3.500 1.500h7v9h-7z" fill="#fff" stroke="#5f6066"/><path d="M5 4h4M5 6h4M5 8h4" stroke="#8a8d92"/></svg></button>
            <button aria-label="Podział stron" class="ml-1"><svg class="w-[14px] h-3" viewBox="0 0 14 12"><path d="M.5.500h13v11H.5z" fill="#a6aab0" stroke="#5f6066"/><path d="M1 1h3v6H1zM5 1h4v6H5z" fill="#fff"/><path d="M4.500 0v7M9.500 0v7.500H0" fill="none" stroke="#5f6066"/></svg></button>
            <button class="ml-3 w-9 text-left">100%</button>
            <button aria-label="Pomniejsz"><svg class="w-4 h-4" viewBox="0 0 16 16"><circle cx="8" cy="8" r="7.300" fill="#eef3f9" stroke="#56657a"/><path d="M4 8h8" stroke="#3f4a5a" stroke-width="2"/></svg></button>
            <input type="range" aria-label="Powiększenie" value="50" class="appearance-none w-[100px] h-px bg-[#6b7f9a] outline-none [&::-webkit-slider-thumb]:appearance-none [&::-webkit-slider-thumb]:w-[9px] [&::-webkit-slider-thumb]:h-3 [&::-webkit-slider-thumb]:border [&::-webkit-slider-thumb]:border-[#56657a] [&::-webkit-slider-thumb]:rounded-b-full [&::-webkit-slider-thumb]:bg-[#f0f5fa]">
            <button aria-label="Powiększ"><svg class="w-4 h-4" viewBox="0 0 16 16"><circle cx="8" cy="8" r="7.300" fill="#eef3f9" stroke="#56657a"/><path d="M4 8h8M8 4v8" stroke="#3f4a5a" stroke-width="2"/></svg></button>
        </div>
    </footer>

    <!-- Conditional formatting dialog -->
    <div role="dialog" aria-labelledby="dialogTitle" class="absolute left-[397px] top-[316px] w-[844px] flex flex-col px-1.5 pb-1.5 rounded-md border border-[#1f2b3a] ring-1 ring-inset ring-white/80 bg-linear-to-r from-[#e2eefa] via-[#bcd9f7] via-30% to-[#cfe2f6] font-['Roboto',sans-serif] text-black shadow-[0_0_3px_rgba(0,0,0,0.3)]">
        <div class="flex justify-between h-7">
            <h2 id="dialogTitle" class="pl-px text-xs leading-[28px]">Menedżer reguł formatowania warunkowego</h2>
            <div class="flex h-[19px] border border-t-0 border-[#4b5a6d] rounded-b overflow-hidden">
                <button aria-label="Pomoc okna" class="w-7 grid place-items-center bg-linear-to-b from-[#e8eff7] from-50% to-[#b4c4d6] to-50% border-r border-[#4b5a6d] font-bold text-[13px] text-[#4a4f57]">?</button>
                <button aria-label="Zamknij okno" class="w-[46px] grid place-items-center bg-linear-to-b from-[#e5a294] via-[#c9432c] via-50% to-[#cf6a52]"><svg class="w-3 h-[10px]" viewBox="0 0 12 10"><path d="M.5.500h3L6 3 8.500.500h3L8 5l3.500 4.500h-3L6 7 3.500 9.500h-3L4 5z" fill="#fff" stroke="#5a3a3a"/></svg></button>
            </div>
        </div>
        <div class="border border-[#55606e] bg-[#f0f0f0] px-1.5 pt-1.5 pb-2">
            <div class="flex gap-2.5 h-6">
                <label for="scope" class="w-[153px] whitespace-nowrap leading-4"><u>P</u>okaż reguły formatowania dla:</label>
                <div class="relative w-[156px] h-[21px] p-px border border-[#a5a8ac] bg-white">
                    <select id="scope" class="appearance-none block w-[136px] h-[17px] pl-px bg-[#86bdfb] outline-1 -outline-offset-1 outline-dotted outline-[#333] leading-[15px]"><option>Bieżące zaznaczenie</option></select>
                    <span class="absolute right-0 top-px w-[17px] h-[17px] grid place-items-center border border-[#555] bg-[#f4f4f4] pointer-events-none"><svg class="w-[7px] h-1" viewBox="0 0 7 4"><path d="M0 0h7L3.500 4z"/></svg></span>
                </div>
            </div>
            <div class="mt-px border border-r-2 border-b-2 border-[#646464] bg-white">
                <div class="flex gap-[11px] px-0.5 pt-0.5 pb-px">
                    <button class="w-[113px] h-[25px] flex items-center justify-center gap-1 rounded-[3px] border border-[#707070] bg-linear-to-b from-[#f2f2f2] from-50% to-[#d4d4d4] to-60%"><svg class="w-4 h-4" viewBox="0 0 16 16"><path d="M.5 2.500h12v12H.5z" fill="#fff" stroke="#5474a8"/><path d="M.5 6.500h12M.5 10.500h12M4.500 2.500v12M8.500 2.500v12" stroke="#5474a8"/><path d="M5 7h3v3H5z" fill="#e8a03c"/><path d="M12 0v8M8 4h8M9 1l6 6M15 1L9 7" stroke="#f0b62a" stroke-width="1.200"/></svg><span><u>N</u>owa reguła...</span></button>
                    <button class="w-[113px] h-[25px] flex items-center justify-center gap-1 rounded-[3px] border border-[#707070] bg-linear-to-b from-[#f2f2f2] from-50% to-[#d4d4d4] to-60%"><svg class="w-4 h-4" viewBox="0 0 16 16"><path d="M.5 1.500h12v12H.5z" fill="#fff" stroke="#5474a8"/><path d="M.5 5.500h12M.5 9.500h12M4.500 1.500v12M8.500 1.500v12" stroke="#5474a8"/><path d="M5 6h3v3H5z" fill="#e8a03c"/><path d="M13 4l2.500 2.500-6 7L6.500 15l.7-3.500z" fill="#f0c25a" stroke="#6b4a1c" stroke-width=".9"/></svg><span><u>E</u>dytuj regułę...</span></button>
                    <button class="w-[113px] h-[25px] flex items-center justify-center gap-1 rounded-[3px] border border-[#707070] bg-linear-to-b from-[#f2f2f2] from-50% to-[#d4d4d4] to-60%"><svg class="w-[13px] h-[13px]" viewBox="0 0 13 13"><path d="M1 1q6 4 10.500 11.500M12 .7Q6 5 1.500 12" fill="none" stroke="#333" stroke-width="2"/></svg><span><u>U</u>suń regułę</span></button>
                    <button aria-label="Przenieś w górę" class="w-6 h-[25px] grid place-items-center rounded-[3px] border border-[#b5b8bc] bg-[#f4f4f4]"><svg class="w-[9px] h-[6px]" viewBox="0 0 9 6"><path d="M0 6h9L4.500 0z" fill="#8e9bb5"/></svg></button>
                    <button aria-label="Przenieś w dół" class="w-6 h-[25px] grid place-items-center rounded-[3px] border border-[#707070] bg-linear-to-b from-[#f2f2f2] from-50% to-[#d4d4d4] to-60%"><svg class="w-[9px] h-[6px]" viewBox="0 0 9 6"><path d="M0 0h9L4.500 6z" fill="#555"/></svg></button>
                </div>
                <div class="flex h-[173px] pl-0.5 border-t border-[#646464]">
                    <div class="flex-1">
                        <table class="w-full table-fixed border-separate border-spacing-0 text-left">
                            <thead class="bg-linear-to-b from-white to-[#f1f3f5]">
                                <tr class="h-[21px]">
                                    <th class="w-[239px] p-0 pl-[3px] font-normal border-b border-r border-[#dfe3e8] whitespace-nowrap">Reguła (stosowana w następującej kolejności)</th>
                                    <th class="w-[134px] p-0 pl-[3px] font-normal border-b border-r border-[#dfe3e8]">Formatowanie</th>
                                    <th class="p-0 pl-[3px] font-normal border-b border-r border-[#dfe3e8]">Dotyczy</th>
                                    <th class="w-[201px] p-0 pl-[3px] font-normal border-b border-r border-[#dfe3e8] whitespace-nowrap">Zatrzymaj, gdy warunek jest prawdziwy</th>
                                </tr>
                            </thead>
                            <tbody id="rules"></tbody>
                        </table>
                    </div>
                    <div class="w-[17px] mr-px flex flex-col justify-between items-center py-2 bg-[#f0f0f0] text-[#7b7f86]">
                        <svg class="w-[7px] h-1"><use href="#up"/></svg>
                        <svg class="w-[7px] h-1"><use href="#down"/></svg>
                    </div>
                </div>
            </div>
            <div class="flex justify-end gap-[11px] pt-1 pr-px">
                <button class="w-[73px] h-[21px] rounded-[3px] border border-[#2f6d95] ring-1 ring-inset ring-[#45c5ee] bg-linear-to-b from-[#f2f2f2] from-50% to-[#d4d4d4] to-60%">OK</button>
                <button class="w-[73px] h-[21px] rounded-[3px] border border-[#707070] bg-linear-to-b from-[#f2f2f2] from-50% to-[#d4d4d4] to-60%">Zamknij</button>
                <button disabled class="w-[73px] h-[21px] rounded-[3px] border border-[#adb2b5] bg-[#f4f4f4] text-[#8e9bb5]">Zastosuj</button>
            </div>
        </div>
    </div>

    <script>
        const letters = 'ABCDEFGHIJKLMNOPQRSTUV'.split('');
        const colA = ['10,0', '150,0', '20,0', '35,0', '64,0', '52,0', '51,9', '50,9', '50,0', '49,0', '48,1', '47,2', '46,2', '45,3', '44,3', '43,4', '42,4', '41,5', '40,6', '39,6', '38,7', '37,7', '36,8', '35,8', '34,9', '34,0', '33,0', '32,1', '31,1', '30,2'];
        const colB = ['9,0', '200,0', '21,0', '40,0', '63,0', '53,0', '51,8', '50,9', '51,0', '50,0', '100,0', '43,0', '47,0', '48,0', '45,0', '77,0', '66,0', '42,0', '40,0', '41,0', '40,0', '38,0', '65,0', '35,0', '34,0', '33,0', '38,0', '31,0', '32,0', '33,0'];
        const redRows = [1, 5, 7, 8, 12, 19, 24, 25, 26, 28];

        // Column headers
        let head = '<th class="w-[26px] h-5 p-0 border-r border-b border-[#9eb6ce] bg-[#dce8f5]"><svg class="w-3 h-3 ml-2.5" viewBox="0 0 12 12"><path d="M12 0v12H0z" fill="#a9bdd6"/></svg></th>';
        letters.forEach(letter => {
            const look = letter === 'B'
                ? 'bg-linear-to-b from-[#fbdd86] to-[#f5c34d] border-[#c99a3c]'
                : 'bg-[#dbe7f4] border-[#9eb6ce]';
            head += `<th class="w-16 h-5 p-0 pt-0.5 font-normal text-[#1e395b] border-r border-b ${look}">${letter}</th>`;
        });
        document.getElementById('columns').innerHTML = head;

        // Rows
        let body = '';
        for (let n = 1; n <= 34; n++) {
            const rowLook = n === 1 ? 'bg-[#fbd668] border-[#c99a3c]' : 'bg-[#dbe7f4] border-[#9eb6ce]';
            body += `<tr><th class="h-5 p-0 pt-0.5 font-normal text-[#1e395b] border-r border-b ${rowLook}">${n}</th>`;
            letters.forEach((letter, i) => {
                let look = 'pr-px border-[#d6d8da]';
                let value = '';
                if (i === 0) {
                    value = colA[n - 1] || '';
                } else if (i === 1 && n <= 30) {
                    value = colB[n - 1];
                    look = redRows.includes(n) ? 'pr-0.5 bg-[#ff0000] border-[#ff0000] text-[#3d0000]' : 'pr-0.5 bg-[#00b050] border-[#00b050] text-[#00260c]';
                }
                body += `<td class="h-5 pt-0.5 pb-0 pl-0 text-right border-r border-b ${look}">${value}</td>`;
            });
            body += '</tr>';
        }
        document.getElementById('rows').innerHTML = body;

        // Rules in the dialog
        const rules = [
            { text: 'Wartość komórki &lt; A1', row: 'bg-[#ece9d8]', sample: 'bg-[#ff0000] text-[#3d0000]' },
            { text: 'Wartość komórki &gt; A1', row: 'bg-white', sample: 'bg-[#00b050] text-[#00260c]' }
        ];
        document.getElementById('rules').innerHTML = rules.map((rule, i) => `
            <tr class="${rule.row}">
                <td class="h-[30px] p-0 pl-[26px] border-b border-[#eeeeee]">${rule.text}</td>
                <td class="p-0 border-b border-[#eeeeee]"><div class="w-[125px] h-[22px] leading-[22px] text-center text-[13px] font-['Lato',sans-serif] ${rule.sample}">AaBbCcYyZz</div></td>
                <td class="p-0 border-b border-[#eeeeee]"><div class="w-[211px] h-[21px] flex border border-[#a5a8ac] bg-white">
                    <input aria-label="Zakres ${i + 1}" value="=$B$1:$B$30" class="flex-1 min-w-0 pl-1 outline-none">
                    <button aria-label="Wybierz zakres ${i + 1}" class="w-[21px] grid place-items-center rounded-[3px] border border-[#5f6b80] bg-[#eef1f5]"><svg class="w-4 h-[14px]"><use href="#picker"/></svg></button>
                </div></td>
                <td class="p-0 border-b border-[#eeeeee]"><input type="checkbox" aria-label="Zatrzymaj ${i + 1}" class="block mx-auto appearance-none w-[13px] h-[13px] border border-[#8e8f8f] ring-2 ring-inset ring-[#f4f4f4] bg-linear-to-br from-[#cbcfd5] to-[#f6f6f6]"></td>
            </tr>`).join('');
    </script>
</body>
</html>
